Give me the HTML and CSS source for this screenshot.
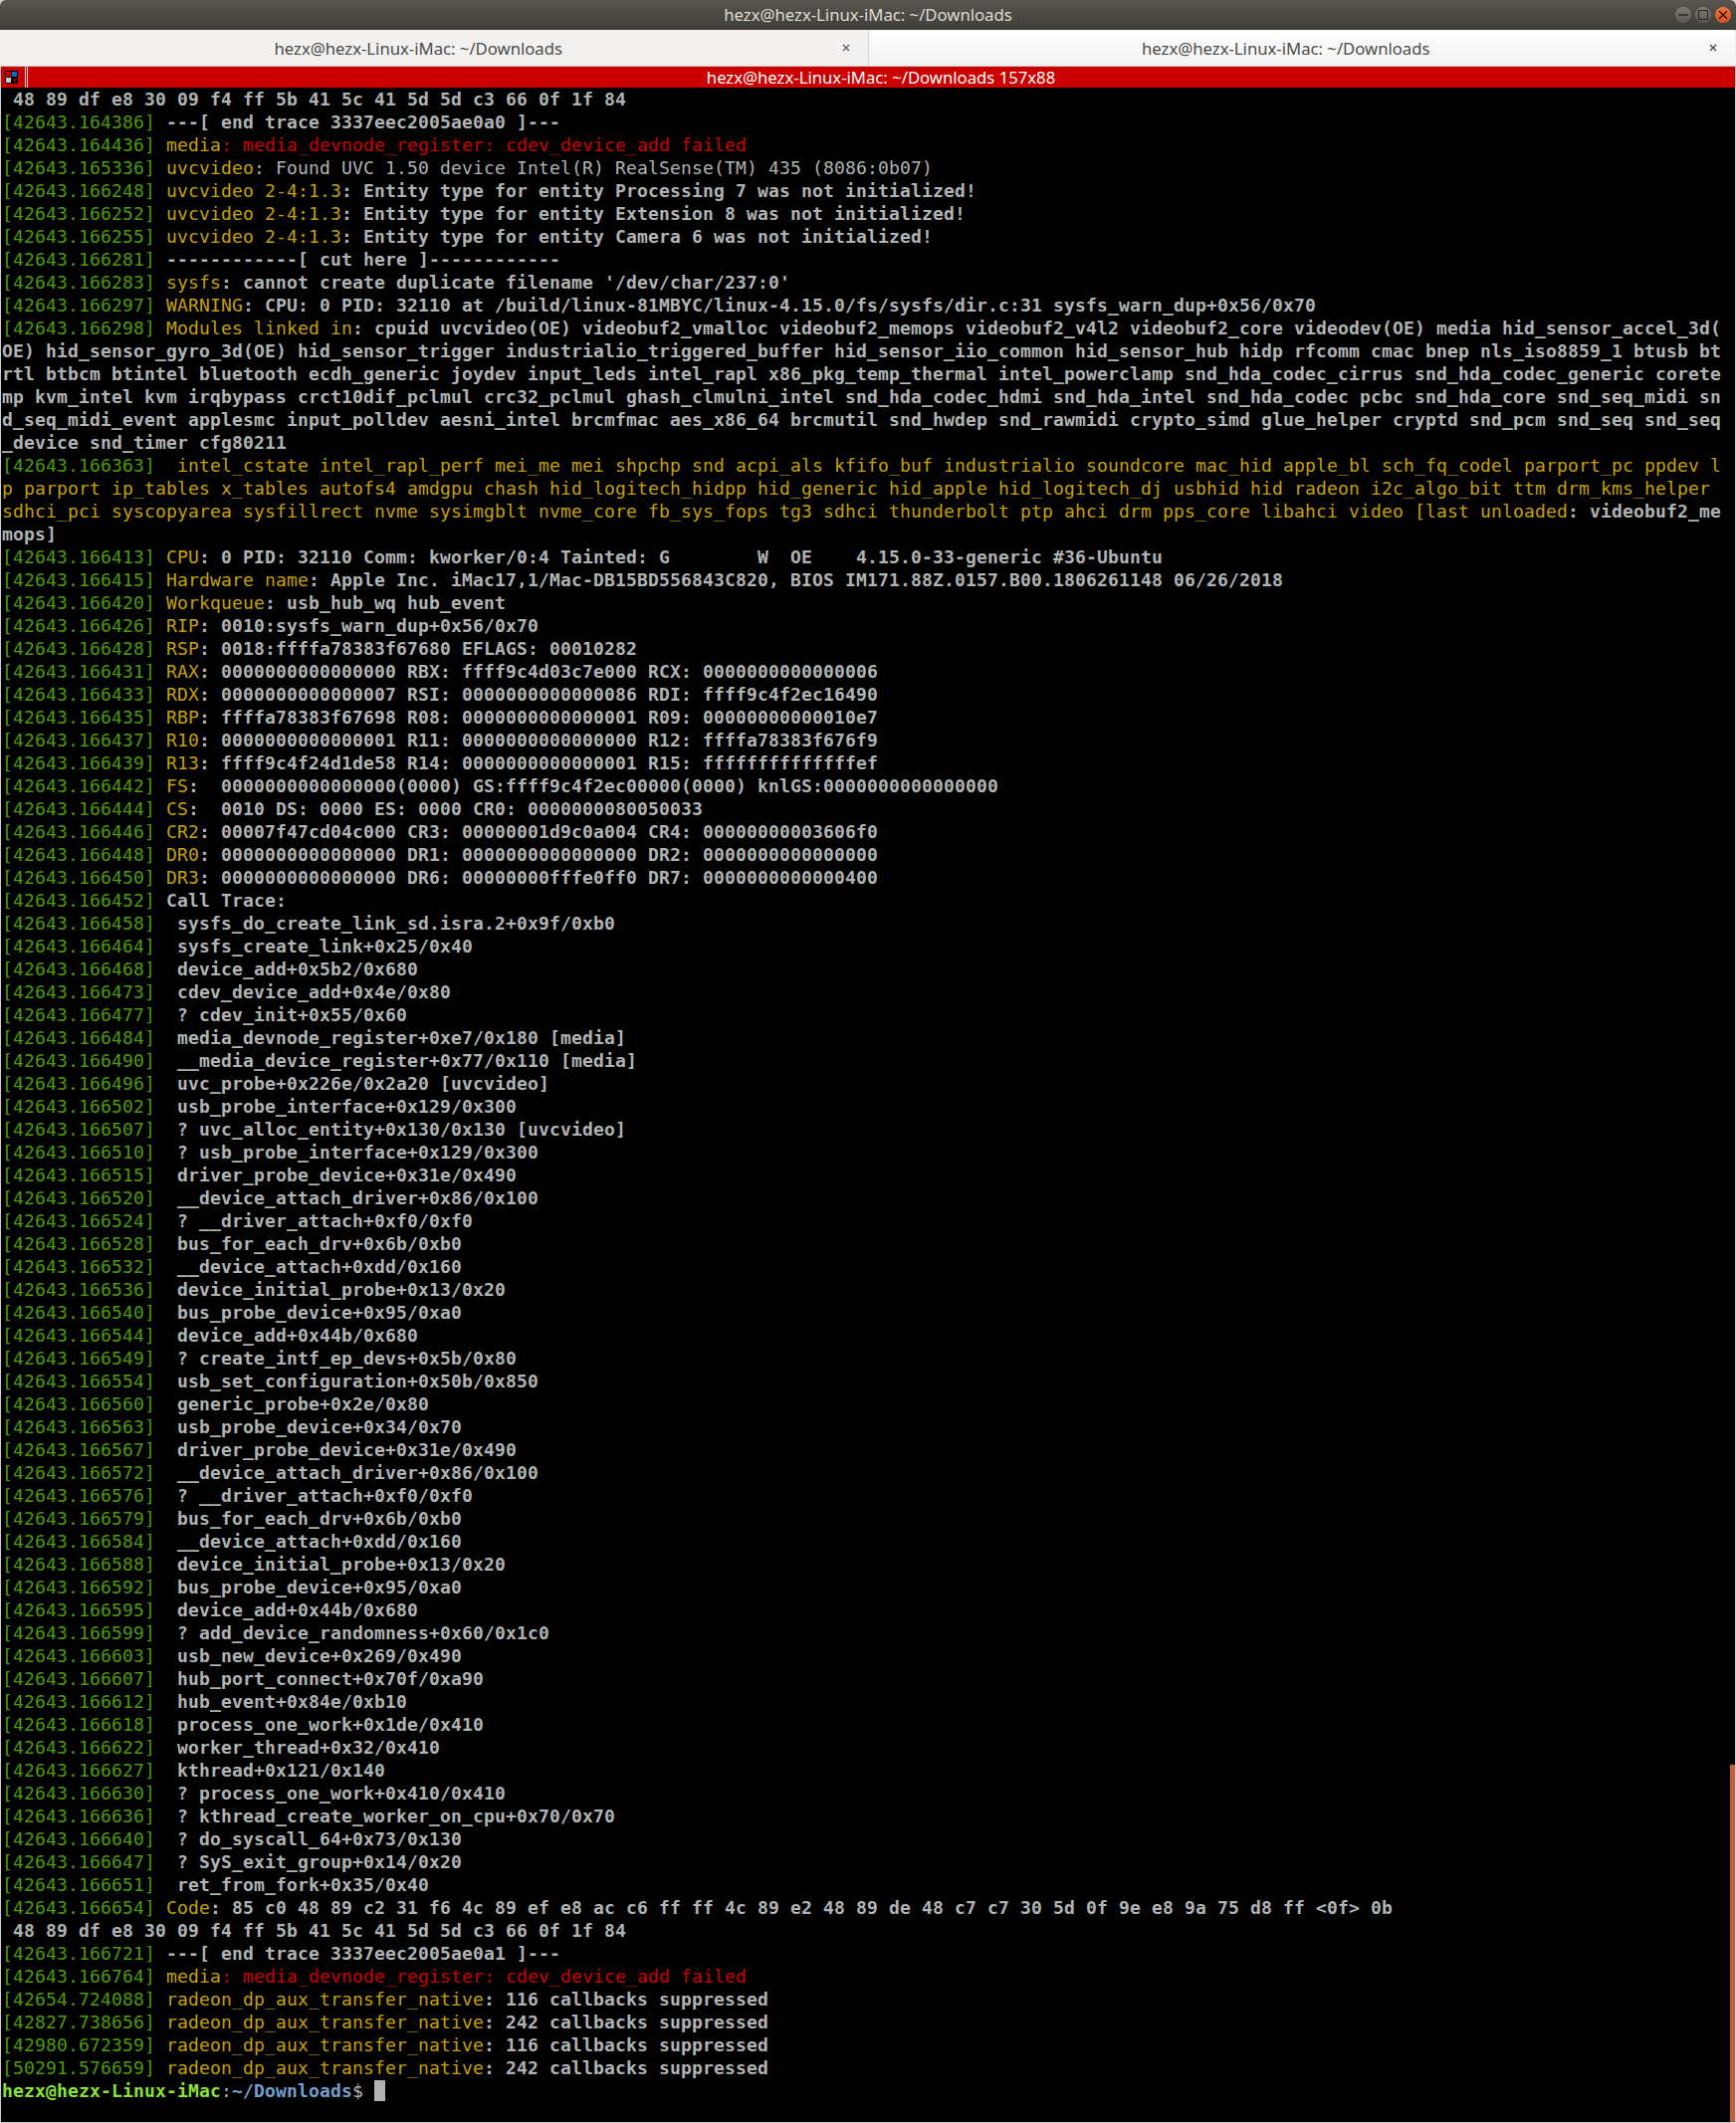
FILE: index.html
```html
<!DOCTYPE html>
<html lang="en">
<head>
<meta charset="utf-8">
<title>hezx@hezx-Linux-iMac: ~/Downloads</title>
<link rel="stylesheet" href="styles.css">
</head>
<body>
<div class="window">
  <header class="titlebar">
    <span class="title">hezx@hezx-Linux-iMac: ~/Downloads</span>
    <div class="controls">
      <span class="ctl"><svg viewBox="0 0 16 16"><path d="M3 8h10" stroke="#2f2e2a" stroke-width="1.6"/></svg></span>
      <span class="ctl"><svg viewBox="0 0 16 16"><rect x="3.5" y="3.5" width="9" height="9" fill="none" stroke="#2f2e2a" stroke-width="1.2"/></svg></span>
      <span class="ctl ctl-close"><svg viewBox="0 0 16 16"><path d="M4 4l8 8M12 4l-8 8" stroke="#3a2013" stroke-width="1.6"/></svg></span>
    </div>
  </header>
  <nav class="tabs">
    <div class="tab"><span class="tab-label">hezx@hezx-Linux-iMac: ~/Downloads</span><svg class="tab-x" viewBox="0 0 8 8"><path d="M1 1l6 6M7 1l-6 6" stroke="#555" stroke-width="1.1"/></svg></div>
    <div class="tab tab-active"><span class="tab-label">hezx@hezx-Linux-iMac: ~/Downloads</span><svg class="tab-x" viewBox="0 0 8 8"><path d="M1 1l6 6M7 1l-6 6" stroke="#444" stroke-width="1.2"/></svg></div>
  </nav>
  <div class="termbar">
    <svg class="termicon" viewBox="0 0 13 13"><rect x="0" y="0" width="13" height="13" fill="#000"/><rect x="1" y="1" width="5" height="5" fill="#cc0000"/><rect x="7" y="1" width="5" height="5" fill="#0a6fc2"/><rect x="1" y="7" width="5" height="5" fill="#c8c8c8"/><path d="M7.5 8.5h5l-2.500 2.500z" fill="#cc0000"/></svg>
    <span class="grip"></span>
    <span class="termbar-title">hezx@hezx-Linux-iMac: ~/Downloads 157x88</span>
  </div>
  <main class="term">
<div class="row b"> 48 89 df e8 30 09 f4 ff 5b 41 5c 41 5d 5d c3 66 0f 1f 84</div>
<div class="row b"><span class="t">[42643.164386]</span> ---[ end trace 3337eec2005ae0a0 ]---</div>
<div class="row"><span class="t">[42643.164436]</span> <span class="y">media</span><span class="e">: media_devnode_register: cdev_device_add failed</span></div>
<div class="row n"><span class="t">[42643.165336]</span> <span class="y">uvcvideo</span>: Found UVC 1.50 device Intel(R) RealSense(TM) 435 (8086:0b07)</div>
<div class="row b"><span class="t">[42643.166248]</span> <span class="y">uvcvideo 2-4:1.3</span>: Entity type for entity Processing 7 was not initialized!</div>
<div class="row b"><span class="t">[42643.166252]</span> <span class="y">uvcvideo 2-4:1.3</span>: Entity type for entity Extension 8 was not initialized!</div>
<div class="row b"><span class="t">[42643.166255]</span> <span class="y">uvcvideo 2-4:1.3</span>: Entity type for entity Camera 6 was not initialized!</div>
<div class="row b"><span class="t">[42643.166281]</span> ------------[ cut here ]------------</div>
<div class="row b"><span class="t">[42643.166283]</span> <span class="y">sysfs</span>: cannot create duplicate filename '/dev/char/237:0'</div>
<div class="row b"><span class="t">[42643.166297]</span> <span class="y">WARNING</span>: CPU: 0 PID: 32110 at /build/linux-81MBYC/linux-4.15.0/fs/sysfs/dir.c:31 sysfs_warn_dup+0x56/0x70</div>
<div class="row b"><span class="t">[42643.166298]</span> <span class="y">Modules linked in</span>: cpuid uvcvideo(OE) videobuf2_vmalloc videobuf2_memops videobuf2_v4l2 videobuf2_core videodev(OE) media hid_sensor_accel_3d(</div>
<div class="row b">OE) hid_sensor_gyro_3d(OE) hid_sensor_trigger industrialio_triggered_buffer hid_sensor_iio_common hid_sensor_hub hidp rfcomm cmac bnep nls_iso8859_1 btusb bt</div>
<div class="row b">rtl btbcm btintel bluetooth ecdh_generic joydev input_leds intel_rapl x86_pkg_temp_thermal intel_powerclamp snd_hda_codec_cirrus snd_hda_codec_generic corete</div>
<div class="row b">mp kvm_intel kvm irqbypass crct10dif_pclmul crc32_pclmul ghash_clmulni_intel snd_hda_codec_hdmi snd_hda_intel snd_hda_codec pcbc snd_hda_core snd_seq_midi sn</div>
<div class="row b">d_seq_midi_event applesmc input_polldev aesni_intel brcmfmac aes_x86_64 brcmutil snd_hwdep snd_rawmidi crypto_simd glue_helper cryptd snd_pcm snd_seq snd_seq</div>
<div class="row b">_device snd_timer cfg80211</div>
<div class="row b"><span class="t">[42643.166363]</span> <span class="y"> intel_cstate intel_rapl_perf mei_me mei shpchp snd acpi_als kfifo_buf industrialio soundcore mac_hid apple_bl sch_fq_codel parport_pc ppdev l</span></div>
<div class="row y">p parport ip_tables x_tables autofs4 amdgpu chash hid_logitech_hidpp hid_generic hid_apple hid_logitech_dj usbhid hid radeon i2c_algo_bit ttm drm_kms_helper </div>
<div class="row b"><span class="y">sdhci_pci syscopyarea sysfillrect nvme sysimgblt nvme_core fb_sys_fops tg3 sdhci thunderbolt ptp ahci drm pps_core libahci video [last unloaded</span>: videobuf2_me</div>
<div class="row b">mops]</div>
<div class="row b"><span class="t">[42643.166413]</span> <span class="y">CPU</span>: 0 PID: 32110 Comm: kworker/0:4 Tainted: G        W  OE    4.15.0-33-generic #36-Ubuntu</div>
<div class="row b"><span class="t">[42643.166415]</span> <span class="y">Hardware name</span>: Apple Inc. iMac17,1/Mac-DB15BD556843C820, BIOS IM171.88Z.0157.B00.1806261148 06/26/2018</div>
<div class="row b"><span class="t">[42643.166420]</span> <span class="y">Workqueue</span>: usb_hub_wq hub_event</div>
<div class="row b"><span class="t">[42643.166426]</span> <span class="y">RIP</span>: 0010:sysfs_warn_dup+0x56/0x70</div>
<div class="row b"><span class="t">[42643.166428]</span> <span class="y">RSP</span>: 0018:ffffa78383f67680 EFLAGS: 00010282</div>
<div class="row b"><span class="t">[42643.166431]</span> <span class="y">RAX</span>: 0000000000000000 RBX: ffff9c4d03c7e000 RCX: 0000000000000006</div>
<div class="row b"><span class="t">[42643.166433]</span> <span class="y">RDX</span>: 0000000000000007 RSI: 0000000000000086 RDI: ffff9c4f2ec16490</div>
<div class="row b"><span class="t">[42643.166435]</span> <span class="y">RBP</span>: ffffa78383f67698 R08: 0000000000000001 R09: 00000000000010e7</div>
<div class="row b"><span class="t">[42643.166437]</span> <span class="y">R10</span>: 0000000000000001 R11: 0000000000000000 R12: ffffa78383f676f9</div>
<div class="row b"><span class="t">[42643.166439]</span> <span class="y">R13</span>: ffff9c4f24d1de58 R14: 0000000000000001 R15: ffffffffffffffef</div>
<div class="row b"><span class="t">[42643.166442]</span> <span class="y">FS</span>:  0000000000000000(0000) GS:ffff9c4f2ec00000(0000) knlGS:0000000000000000</div>
<div class="row b"><span class="t">[42643.166444]</span> <span class="y">CS</span>:  0010 DS: 0000 ES: 0000 CR0: 0000000080050033</div>
<div class="row b"><span class="t">[42643.166446]</span> <span class="y">CR2</span>: 00007f47cd04c000 CR3: 00000001d9c0a004 CR4: 00000000003606f0</div>
<div class="row b"><span class="t">[42643.166448]</span> <span class="y">DR0</span>: 0000000000000000 DR1: 0000000000000000 DR2: 0000000000000000</div>
<div class="row b"><span class="t">[42643.166450]</span> <span class="y">DR3</span>: 0000000000000000 DR6: 00000000fffe0ff0 DR7: 0000000000000400</div>
<div class="row b"><span class="t">[42643.166452]</span> Call Trace:</div>
<div class="row b"><span class="t">[42643.166458]</span>  sysfs_do_create_link_sd.isra.2+0x9f/0xb0</div>
<div class="row b"><span class="t">[42643.166464]</span>  sysfs_create_link+0x25/0x40</div>
<div class="row b"><span class="t">[42643.166468]</span>  device_add+0x5b2/0x680</div>
<div class="row b"><span class="t">[42643.166473]</span>  cdev_device_add+0x4e/0x80</div>
<div class="row b"><span class="t">[42643.166477]</span>  ? cdev_init+0x55/0x60</div>
<div class="row b"><span class="t">[42643.166484]</span>  media_devnode_register+0xe7/0x180 [media]</div>
<div class="row b"><span class="t">[42643.166490]</span>  __media_device_register+0x77/0x110 [media]</div>
<div class="row b"><span class="t">[42643.166496]</span>  uvc_probe+0x226e/0x2a20 [uvcvideo]</div>
<div class="row b"><span class="t">[42643.166502]</span>  usb_probe_interface+0x129/0x300</div>
<div class="row b"><span class="t">[42643.166507]</span>  ? uvc_alloc_entity+0x130/0x130 [uvcvideo]</div>
<div class="row b"><span class="t">[42643.166510]</span>  ? usb_probe_interface+0x129/0x300</div>
<div class="row b"><span class="t">[42643.166515]</span>  driver_probe_device+0x31e/0x490</div>
<div class="row b"><span class="t">[42643.166520]</span>  __device_attach_driver+0x86/0x100</div>
<div class="row b"><span class="t">[42643.166524]</span>  ? __driver_attach+0xf0/0xf0</div>
<div class="row b"><span class="t">[42643.166528]</span>  bus_for_each_drv+0x6b/0xb0</div>
<div class="row b"><span class="t">[42643.166532]</span>  __device_attach+0xdd/0x160</div>
<div class="row b"><span class="t">[42643.166536]</span>  device_initial_probe+0x13/0x20</div>
<div class="row b"><span class="t">[42643.166540]</span>  bus_probe_device+0x95/0xa0</div>
<div class="row b"><span class="t">[42643.166544]</span>  device_add+0x44b/0x680</div>
<div class="row b"><span class="t">[42643.166549]</span>  ? create_intf_ep_devs+0x5b/0x80</div>
<div class="row b"><span class="t">[42643.166554]</span>  usb_set_configuration+0x50b/0x850</div>
<div class="row b"><span class="t">[42643.166560]</span>  generic_probe+0x2e/0x80</div>
<div class="row b"><span class="t">[42643.166563]</span>  usb_probe_device+0x34/0x70</div>
<div class="row b"><span class="t">[42643.166567]</span>  driver_probe_device+0x31e/0x490</div>
<div class="row b"><span class="t">[42643.166572]</span>  __device_attach_driver+0x86/0x100</div>
<div class="row b"><span class="t">[42643.166576]</span>  ? __driver_attach+0xf0/0xf0</div>
<div class="row b"><span class="t">[42643.166579]</span>  bus_for_each_drv+0x6b/0xb0</div>
<div class="row b"><span class="t">[42643.166584]</span>  __device_attach+0xdd/0x160</div>
<div class="row b"><span class="t">[42643.166588]</span>  device_initial_probe+0x13/0x20</div>
<div class="row b"><span class="t">[42643.166592]</span>  bus_probe_device+0x95/0xa0</div>
<div class="row b"><span class="t">[42643.166595]</span>  device_add+0x44b/0x680</div>
<div class="row b"><span class="t">[42643.166599]</span>  ? add_device_randomness+0x60/0x1c0</div>
<div class="row b"><span class="t">[42643.166603]</span>  usb_new_device+0x269/0x490</div>
<div class="row b"><span class="t">[42643.166607]</span>  hub_port_connect+0x70f/0xa90</div>
<div class="row b"><span class="t">[42643.166612]</span>  hub_event+0x84e/0xb10</div>
<div class="row b"><span class="t">[42643.166618]</span>  process_one_work+0x1de/0x410</div>
<div class="row b"><span class="t">[42643.166622]</span>  worker_thread+0x32/0x410</div>
<div class="row b"><span class="t">[42643.166627]</span>  kthread+0x121/0x140</div>
<div class="row b"><span class="t">[42643.166630]</span>  ? process_one_work+0x410/0x410</div>
<div class="row b"><span class="t">[42643.166636]</span>  ? kthread_create_worker_on_cpu+0x70/0x70</div>
<div class="row b"><span class="t">[42643.166640]</span>  ? do_syscall_64+0x73/0x130</div>
<div class="row b"><span class="t">[42643.166647]</span>  ? SyS_exit_group+0x14/0x20</div>
<div class="row b"><span class="t">[42643.166651]</span>  ret_from_fork+0x35/0x40</div>
<div class="row b"><span class="t">[42643.166654]</span> <span class="y">Code</span>: 85 c0 48 89 c2 31 f6 4c 89 ef e8 ac c6 ff ff 4c 89 e2 48 89 de 48 c7 c7 30 5d 0f 9e e8 9a 75 d8 ff &lt;0f&gt; 0b</div>
<div class="row b"> 48 89 df e8 30 09 f4 ff 5b 41 5c 41 5d 5d c3 66 0f 1f 84</div>
<div class="row b"><span class="t">[42643.166721]</span> ---[ end trace 3337eec2005ae0a1 ]---</div>
<div class="row"><span class="t">[42643.166764]</span> <span class="y">media</span><span class="e">: media_devnode_register: cdev_device_add failed</span></div>
<div class="row b"><span class="t">[42654.724088]</span> <span class="y">radeon_dp_aux_transfer_native</span>: 116 callbacks suppressed</div>
<div class="row b"><span class="t">[42827.738656]</span> <span class="y">radeon_dp_aux_transfer_native</span>: 242 callbacks suppressed</div>
<div class="row b"><span class="t">[42980.672359]</span> <span class="y">radeon_dp_aux_transfer_native</span>: 116 callbacks suppressed</div>
<div class="row b"><span class="t">[50291.576659]</span> <span class="y">radeon_dp_aux_transfer_native</span>: 242 callbacks suppressed</div>
<div class="row n"><span class="pu">hezx@hezx-Linux-iMac</span>:<span class="pd">~/Downloads</span>$ <span class="cursor"> </span></div>
    <div class="scrollthumb"></div>
  </main>
</div>
</body>
</html>
```

FILE: styles.css
```css
* { box-sizing: border-box; }
html, body { margin: 0; padding: 0; background: #cfcfcf; }
body { width: 1744px; height: 2133px; overflow: hidden; }

.window {
  width: 1744px;
  height: 2133px;
  display: flex;
  flex-direction: column;
  font-family: "Noto Sans", "Open Sans", sans-serif;
}

.titlebar {
  height: 30px;
  flex: none;
  display: flex;
  align-items: center;
  justify-content: center;
  position: relative;
  background: linear-gradient(#5a564e, #3e3d38);
  border-radius: 6px 6px 0 0;
  color: #dfdbd2;
  font-size: 16.7px;
}
.title { padding-bottom: 1px; }

.controls {
  position: absolute;
  right: 5px;
  top: 7px;
  display: flex;
  gap: 4px;
}
.ctl {
  width: 16px;
  height: 16px;
  border-radius: 50%;
  background: linear-gradient(#7d7b75, #5a5853);
  display: block;
}
.ctl svg { display: block; width: 16px; height: 16px; }
.ctl-close { background: linear-gradient(#f0743e, #d9501e); }

.tabs {
  height: 37px;
  flex: none;
  display: flex;
  padding-left: 1px;
  padding-right: 1px;
  background: #f2f1f0;
  border-bottom: 1px solid #c4c3c1;
}
.tab {
  flex: 1;
  display: flex;
  align-items: center;
  justify-content: center;
  position: relative;
  color: #4c4c4c;
  font-size: 16.7px;
  padding: 1px 32px 0 0;
}
.tab-active {
  background: linear-gradient(#ffffff, #f3f2f1);
  border-left: 1px solid #d3d2d0;
  border-radius: 3px 3px 0 0;
}
.tab-x {
  position: absolute;
  right: 18px;
  top: 14px;
  width: 8px;
  height: 8px;
}

.termbar {
  height: 21px;
  flex: none;
  margin: 0 1px;
  padding-left: 26px;
  display: flex;
  align-items: center;
  justify-content: center;
  position: relative;
  background: #cc0000;
  color: #ffffff;
  font-size: 16.7px;
}
.termicon {
  position: absolute;
  left: 4px;
  top: 4px;
  width: 13px;
  height: 13px;
}
.grip {
  position: absolute;
  left: 24px;
  top: 0;
  width: 3px;
  height: 21px;
  border-left: 1px solid #f5d5d5;
  border-right: 1px solid #f5d5d5;
}

.term {
  flex: 1;
  margin: 0 1px 1px;
  padding-left: 1px;
  position: relative;
  background: #000000;
  color: #b0b3b3;
  font-family: "DejaVu Sans Mono", monospace;
  font-size: 18px;
  letter-spacing: 0.163px;
  overflow: hidden;
}
.row {
  height: 23px;
  line-height: 23px;
  white-space: pre;
}
.b { font-weight: bold; }
.n { font-weight: normal; }
.t { color: #4e9a06; font-weight: normal; }
.y { color: #c4a000; font-weight: normal; }
.e { color: #cc0000; font-weight: normal; }
.pu { color: #8ae234; font-weight: bold; }
.pd { color: #729fcf; font-weight: bold; }
.cursor { background: #b0b3b3; }

.scrollthumb {
  position: absolute;
  right: 0;
  top: 1685px;
  width: 5px;
  bottom: 0;
  background: #c0603a;
}
```
